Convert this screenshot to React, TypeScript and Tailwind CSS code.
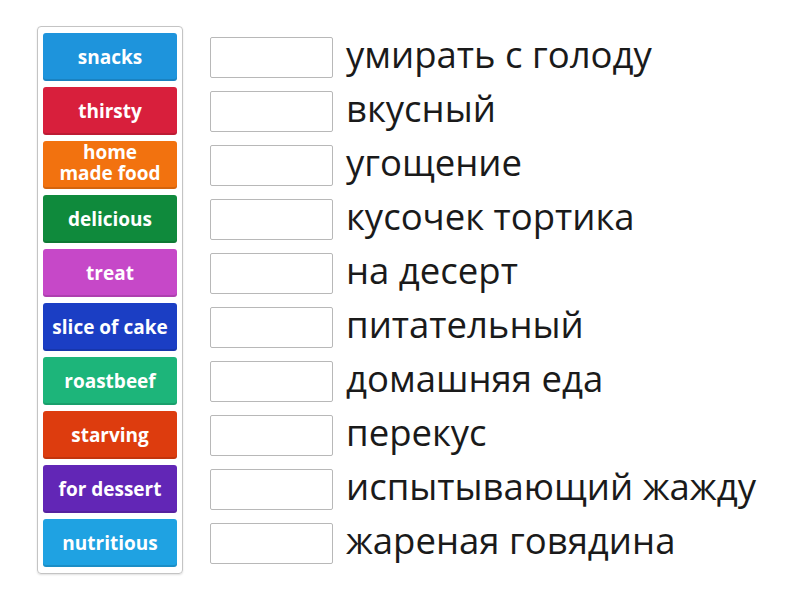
const tiles: { label: string[]; bg: string }[] = [
  { label: ['snacks'], bg: 'bg-[#1e94dc]' },
  { label: ['thirsty'], bg: 'bg-[#d81f3c]' },
  { label: ['home', 'made food'], bg: 'bg-[#f2720f]' },
  { label: ['delicious'], bg: 'bg-[#0f8a3c]' },
  { label: ['treat'], bg: 'bg-[#c648c8]' },
  { label: ['slice of cake'], bg: 'bg-[#1b3ec4]' },
  { label: ['roastbeef'], bg: 'bg-[#1db57a]' },
  { label: ['starving'], bg: 'bg-[#dd3c0e]' },
  { label: ['for dessert'], bg: 'bg-[#6226b6]' },
  { label: ['nutritious'], bg: 'bg-[#1fa2e2]' },
]

const answers = [
  'умирать с голоду',
  'вкусный',
  'угощение',
  'кусочек тортика',
  'на десерт',
  'питательный',
  'домашняя еда',
  'перекус',
  'испытывающий жажду',
  'жареная говядина',
]

export default function App() {
  return (
    <div className="w-[800px] h-[600px] bg-white flex items-start pl-[37px] pt-[26px] font-['Open_Sans',sans-serif]">
      <div className="w-[146px] rounded-[4px] border border-[#c4c4c4] px-[5px] pt-[6px] pb-[6px] flex flex-col gap-[6px] shadow-[0_1px_2px_rgba(0,0,0,0.12)]">
        {tiles.map((t) => (
          <div
            key={t.label.join(' ')}
            className={`${t.bg} h-[48px] rounded-[3px] flex flex-col items-center justify-center text-white font-bold text-[19px] leading-[21px] shadow-[inset_0_-2px_0_rgba(0,0,0,0.12)] ${t.label.length > 1 ? 'pb-[4px]' : ''}`}
          >
            {t.label.map((l) => (
              <span key={l}>{l}</span>
            ))}
          </div>
        ))}
      </div>
      <div className="ml-[27px] pt-[4px] flex flex-col">
        {answers.map((a) => (
          <div key={a} className="h-[54px] flex items-center gap-[13px]">
            <div className="w-[123px] h-[41px] rounded-[2px] border border-[#b8b8b8] bg-white" />
            <span className="text-[36.5px] text-[#1a1a1a] leading-none -mt-[5px]">{a}</span>
          </div>
        ))}
      </div>
    </div>
  )
}
